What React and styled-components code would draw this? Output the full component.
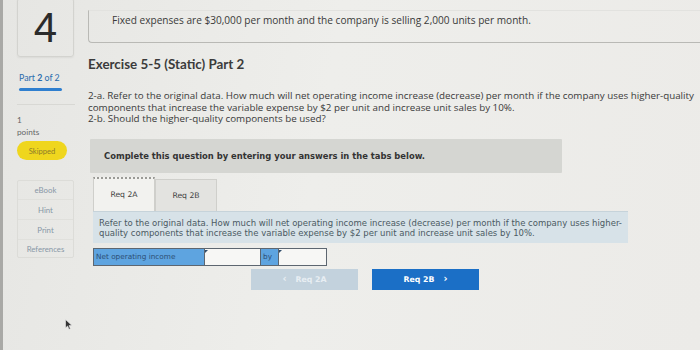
import React from "react";
import styled, { createGlobalStyle } from "styled-components";

const Global = createGlobalStyle`
  html, body {
    margin: 0;
    padding: 0;
    background: #ebebe8;
    overflow: hidden;
  }
  #root {
    width: 700px;
    height: 350px;
  }
`;

const Page = styled.div`
  position: relative;
  display: flex;
  width: 700px;
  height: 350px;
  background: linear-gradient(100deg, #e6e6e3 0%, #eeeeeb 45%, #ecebe8 100%);
  border-left: 3px solid #a9a9a6;
  box-sizing: border-box;
  font-family: Lato, "Open Sans", sans-serif;
  color: #333;
`;

const Sidebar = styled.aside`
  width: 85px;
  flex-shrink: 0;
  padding-left: 14px;
  box-sizing: border-box;
  display: flex;
  flex-direction: column;
`;

const NumberCard = styled.div`
  width: 55px;
  height: 57px;
  margin-top: -2px;
  border: 1px solid #d3d3cf;
  border-radius: 3px;
  box-shadow: 0 1px 2px rgba(0, 0, 0, 0.06);
  display: flex;
  align-items: center;
  justify-content: center;
  font-family: "Liberation Sans", Arial, sans-serif;
  font-size: 42px;
  color: #2b2b2b;
`;

const PartLabel = styled.div`
  margin-top: 15px;
  padding-left: 2px;
  font-size: 8.8px;
  color: #2a6cae;
  b {
    font-weight: 700;
  }
`;

const Progress = styled.div`
  margin: 5px 0 0 2px;
  width: 43px;
  height: 3px;
  border-radius: 2px;
  background: #2f7fcf;
`;

const Divider = styled.div`
  margin-top: 13px;
  width: 58px;
  height: 1px;
  background: #d8d8d4;
`;

const Points = styled.div`
  margin-top: 9px;
  font-size: 8.2px;
  line-height: 12px;
  color: #666;
`;

const Pill = styled.div`
  margin-top: 3px;
  width: 50px;
  height: 19px;
  border-radius: 10px;
  background: #efd61e;
  display: flex;
  align-items: center;
  justify-content: center;
  font-size: 7.6px;
  color: #8d7d2a;
`;

const ToolBox = styled.div`
  margin-top: 20px;
  width: 55px;
  border: 1px solid #dcdcd8;
  border-radius: 2px;
  display: flex;
  flex-direction: column;
`;

const Tool = styled.div`
  height: ${(p) => p.$h || 19}px;
  display: flex;
  align-items: center;
  justify-content: center;
  font-size: 7.8px;
  color: #8797a6;
  border-top: ${(p) => (p.$first ? "none" : "1px solid #e0e0dc")};
`;

const Main = styled.main`
  flex: 1;
  display: flex;
  flex-direction: column;
  min-width: 0;
`;

const Given = styled.div`
  margin-top: 10px;
  height: 33px;
  width: calc(100% + 30px);
  border-left: 1px solid #b9b9b5;
  border-bottom: 1px solid #b9b9b5;
  border-top: 1px solid #e2e2df;
  border-radius: 0 0 0 4px;
  box-sizing: border-box;
  padding: 2px 0 0 23px;
  font-family: "Open Sans", Lato, sans-serif;
  font-size: 10.1px;
  color: #3a3a3a;
`;

const Heading = styled.h1`
  margin: 13px 0 0 0;
  font-size: 13.4px;
  font-weight: 700;
  color: #3b3b3b;
`;

const Question = styled.p`
  margin: 18px 0 0 0;
  width: 640px;
  font-family: "Open Sans", Lato, sans-serif;
  font-size: 9.8px;
  line-height: 11.5px;
  color: #3a3a3a;
`;

const Instruction = styled.div`
  margin-top: 14px;
  margin-left: 2px;
  width: 472px;
  height: 34px;
  background: #d5d6d2;
  border-radius: 1px;
  display: flex;
  align-items: center;
  padding-left: 14px;
  box-sizing: border-box;
  font-family: "DejaVu Sans", Verdana, sans-serif;
  font-weight: 700;
  font-size: 8.4px;
  color: #333;
`;

const Tabs = styled.div`
  margin-top: 4px;
  margin-left: 5px;
  display: flex;
  align-items: flex-end;
`;

const Tab = styled.div`
  width: 62px;
  height: ${(p) => (p.$active ? 34 : 32)}px;
  box-sizing: border-box;
  display: flex;
  align-items: center;
  justify-content: center;
  font-family: "DejaVu Sans", Verdana, sans-serif;
  font-size: 7.7px;
  color: #444;
  background: ${(p) => (p.$active ? "#f2f2ef" : "#e3e3e0")};
  border: 1px solid #cfcfcb;
  border-bottom: none;
  border-top: ${(p) => (p.$active ? "2px dotted #9a9a96" : "1px solid #cfcfcb")};
`;

const Info = styled.div`
  margin-left: 5px;
  width: 535px;
  height: 32px;
  box-sizing: border-box;
  background: #d7e2e8;
  border-top: 1px solid #c6d3da;
  padding: 6px 0 0 6px;
  font-family: "DejaVu Sans", Verdana, sans-serif;
  font-size: 8.5px;
  line-height: 10px;
  color: #4b5a63;
`;

const AnswerRow = styled.div`
  margin-top: 5px;
  margin-left: 5px;
  display: flex;
  height: 16px;
  width: fit-content;
  border: 1px solid #5d6670;
`;

const Cell = styled.div`
  width: ${(p) => p.$w}px;
  box-sizing: border-box;
  display: flex;
  align-items: center;
  padding-left: 2px;
  font-family: "DejaVu Sans", Verdana, sans-serif;
  font-size: 7.3px;
  color: #2d4f75;
  background: #5ea4e0;
`;

const Input = styled.div`
  position: relative;
  width: ${(p) => p.$w}px;
  background: #f7f7f5;
  border-left: 1px solid #5d6670;
  border-right: ${(p) => (p.$last ? "none" : "1px solid #5d6670")};
  box-sizing: border-box;
  &::before {
    content: "";
    position: absolute;
    left: 0;
    top: 1px;
    border-left: 3px solid #2f4c6b;
    border-bottom: 3px solid transparent;
  }
`;

const Nav = styled.div`
  margin-top: 3px;
  margin-left: 163px;
  display: flex;
  gap: 14px;
`;

const NavButton = styled.div`
  width: 107px;
  height: 21px;
  display: flex;
  align-items: center;
  justify-content: center;
  gap: 9px;
  font-family: "DejaVu Sans", Verdana, sans-serif;
  font-size: 7.8px;
  font-weight: 700;
  color: ${(p) => (p.$primary ? "#fff" : "#e8eef3")};
  background: ${(p) => (p.$primary ? "#1b6fc6" : "#c3d2dd")};
`;

const Chevron = styled.span`
  font-size: 10px;
  line-height: 1;
`;

const Cursor = styled.svg`
  position: absolute;
  left: 62px;
  top: 319px;
`;

export default function App() {
  return (
    <>
      <Global />
      <Page>
        <Sidebar>
          <NumberCard>4</NumberCard>
          <PartLabel>
            Part <b>2</b> of 2
          </PartLabel>
          <Progress />
          <Divider />
          <Points>
            1
            <br />
            points
          </Points>
          <Pill>Skipped</Pill>
          <ToolBox>
            <Tool $first $h={18}>eBook</Tool>
            <Tool>Hint</Tool>
            <Tool>Print</Tool>
            <Tool $h={17}>References</Tool>
          </ToolBox>
        </Sidebar>
        <Main>
          <Given>
            Fixed expenses are $30,000 per month and the company is selling
            2,000 units per month.
          </Given>
          <Heading>Exercise 5-5 (Static) Part 2</Heading>
          <Question>
            2-a. Refer to the original data. How much will net operating
            income increase (decrease) per month if the company uses
            higher-quality
            <br />
            components that increase the variable expense by $2 per unit and
            increase unit sales by 10%.
            <br />
            2-b. Should the higher-quality components be used?
          </Question>
          <Instruction>
            Complete this question by entering your answers in the tabs below.
          </Instruction>
          <Tabs>
            <Tab $active>Req 2A</Tab>
            <Tab>Req 2B</Tab>
          </Tabs>
          <Info>
            Refer to the original data. How much will net operating income
            increase (decrease) per month if the company uses higher-
            <br />
            quality components that increase the variable expense by $2 per
            unit and increase unit sales by 10%.
          </Info>
          <AnswerRow>
            <Cell $w={110}>Net operating income</Cell>
            <Input $w={57} />
            <Cell $w={17}>by</Cell>
            <Input $w={48} $last />
          </AnswerRow>
          <Nav>
            <NavButton>
              <Chevron>‹</Chevron>
              <span>Req 2A</span>
            </NavButton>
            <NavButton $primary>
              <span>Req 2B</span>
              <Chevron>›</Chevron>
            </NavButton>
          </Nav>
        </Main>
        <Cursor width="8" height="11" viewBox="0 0 8 11">
          <path d="M0.5 0.5 L0.5 9 L2.6 7 L4 10.3 L5.4 9.7 L4 6.6 L7 6.6 Z" fill="#333" stroke="#eee" strokeWidth="0.6" />
        </Cursor>
      </Page>
    </>
  );
}
